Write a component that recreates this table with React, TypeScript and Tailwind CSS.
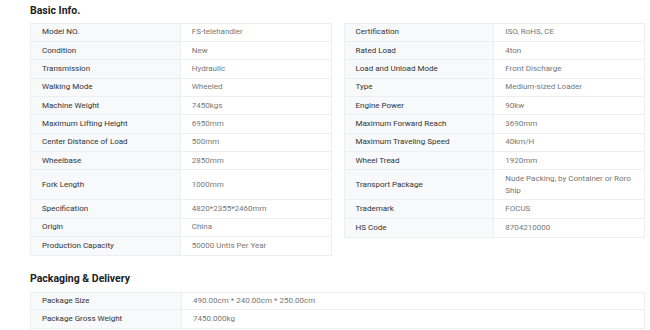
const LEFT: [string, string][] = [
  ["Model NO.", "FS-telehandler"],
  ["Condition", "New"],
  ["Transmission", "Hydraulic"],
  ["Walking Mode", "Wheeled"],
  ["Machine Weight", "7450kgs"],
  ["Maximum Lifting Height", "6950mm"],
  ["Center Distance of Load", "500mm"],
  ["Wheelbase", "2850mm"],
  ["Fork Length", "1000mm"],
  ["Specification", "4820*2355*2460mm"],
  ["Origin", "China"],
  ["Production Capacity", "50000 Untis Per Year"],
];

const RIGHT: [string, string][] = [
  ["Certification", "ISO, RoHS, CE"],
  ["Rated Load", "4ton"],
  ["Load and Unload Mode", "Front Discharge"],
  ["Type", "Medium-sized Loader"],
  ["Engine Power", "90kw"],
  ["Maximum Forward Reach", "3690mm"],
  ["Maximum Traveling Speed", "40km/H"],
  ["Wheel Tread", "1920mm"],
  ["Transport Package", "Nude Packing, by Container or Roro Ship"],
  ["Trademark", "FOCUS"],
  ["HS Code", "8704210000"],
];

const PACKAGING: [string, string][] = [
  ["Package Size", "490.00cm * 240.00cm * 250.00cm"],
  ["Package Gross Weight", "7450.000kg"],
];

function SpecTable({ rows, tall, rowClass, labelClass }: { rows: [string, string][]; tall?: number; rowClass: string; labelClass: string }) {
  return (
    <div className="border border-[#eceef2]">
      {rows.map(([label, value], i) => (
        <div
          key={label}
          className={`flex ${i === tall ? "h-[30px]" : rowClass} ${i < rows.length - 1 ? "border-b border-[#eceef2]" : ""}`}
        >
          <div className={`${labelClass} shrink-0 flex items-center bg-[#f8f9fb] border-r border-[#eceef2] pl-[11px] text-[#333]`}>
            {label}
          </div>
          <div className="flex-1 flex items-center pl-[11px] pr-[10px] text-[#777] leading-[12px]">{value}</div>
        </div>
      ))}
    </div>
  );
}

export default function App() {
  return (
    <div className="w-[650px] h-[330px] overflow-hidden bg-white pl-[30px] pr-[5px] pt-[3.5px] font-['Roboto',sans-serif] text-[8px]">
      <h2 className="text-[10.5px] leading-[14px] font-bold text-[#222] mb-[5px]">Basic Info.</h2>
      <div className="grid grid-cols-2 gap-x-[12px] items-start">
        <SpecTable rows={LEFT} tall={8} rowClass="h-[18.35px]" labelClass="w-1/2" />
        <SpecTable rows={RIGHT} tall={8} rowClass="h-[18.35px]" labelClass="w-1/2" />
      </div>

      <h2 className="mt-[16px] text-[10.5px] leading-[14px] font-bold text-[#222] mb-[5.5px]">Packaging &amp; Delivery</h2>
      <SpecTable rows={PACKAGING} rowClass="h-[17.7px]" labelClass="w-[151px]" />
    </div>
  );
}
